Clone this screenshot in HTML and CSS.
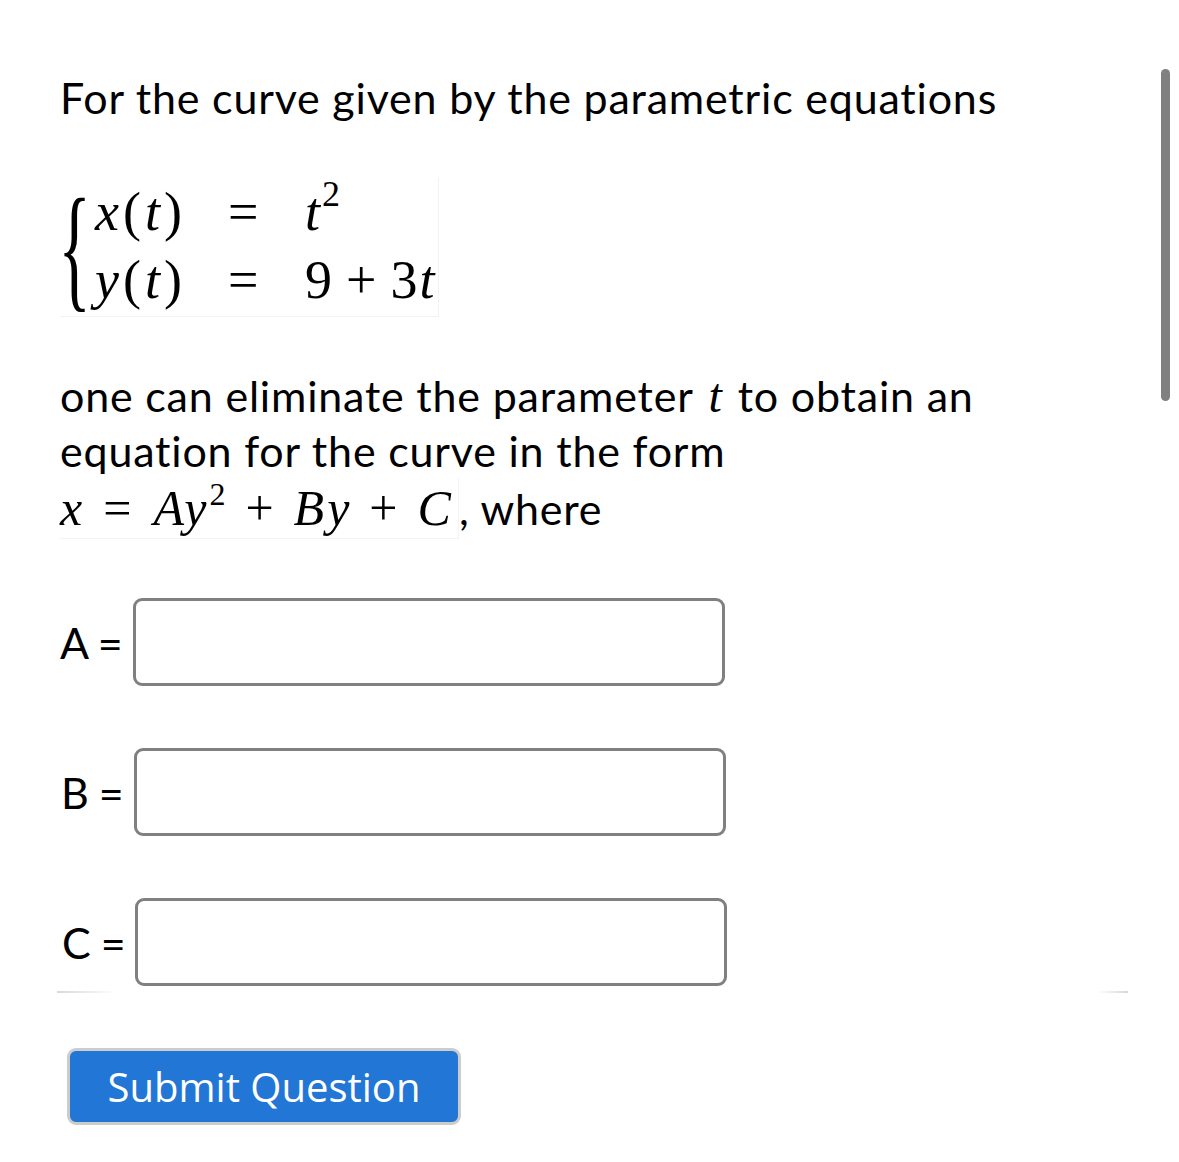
FILE: index.html
```html
<!DOCTYPE html>
<html>
<head>
<meta charset="utf-8">
<link rel="stylesheet" href="styles.css">
</head>
<body>
<div class="page">
  <p class="text first">For the curve given by the parametric equations</p>
  <div class="system">
    <div class="brace">{</div>
    <div class="rows">
      <div class="row"><span class="lhs"><i>x</i>(<i>t</i>)</span><span class="eq">=</span><span class="rhs"><i>t</i><sup>2</sup></span></div>
      <div class="row"><span class="lhs"><i>y</i>(<i>t</i>)</span><span class="eq">=</span><span class="rhs">9<span class="op">+</span>3<i>t</i></span></div>
    </div>
  </div>
  <p class="text second">one can eliminate the parameter <i class="mi">t</i> to obtain an equation for the curve in the form <span class="inline-math"><i>x</i><span class="rel">=</span><i>A</i><i>y</i><sup>2</sup><span class="bin">+</span><i>B</i><i>y</i><span class="bin">+</span><i>C</i></span>, where</p>
  <div class="answers">
    <div class="answer"><span class="label">A =</span><span class="box"></span></div>
    <div class="answer shift1"><span class="label">B =</span><span class="box"></span></div>
    <div class="answer shift2"><span class="label">C =</span><span class="box"></span></div>
  </div>
  <div class="rule"></div>
  <button class="submit">Submit Question</button>
</div>
<div class="scrollbar"></div>
</body>
</html>
```
FILE: styles.css
```css
html, body {
  margin: 0;
  padding: 0;
  background: #ffffff;
}
body {
  width: 1179px;
  height: 1162px;
  overflow: hidden;
  position: relative;
  font-family: Lato, "Noto Sans", sans-serif;
  color: #000;
}
.page {
  padding: 70px 0 0 60px;
  width: 1000px;
}
.text {
  margin: 0;
  font-size: 43px;
  letter-spacing: 0.8px;
  line-height: 55px;
}
.first {
  margin-bottom: 53px;
}
.second {
  margin-top: -3px;
}
.system {
  display: flex;
  align-items: flex-start;
  width: 378px;
  height: 138px;
  border-right: 1px solid #f2f2f2;
  border-bottom: 1px solid #f2f2f2;
  font-family: "Liberation Serif", serif;
  font-size: 54px;
  margin-bottom: 54px;
}
.brace {
  width: 35px;
  font-size: 80px;
  line-height: 80px;
  transform: translate(-2px, 30px) scale(0.85, 1.72);
  transform-origin: 2px 40px;
}
.rows {
  display: flex;
  flex-direction: column;
  padding-top: 0;
}
.row {
  display: flex;
  align-items: baseline;
  line-height: 68px;
  height: 68px;
}
.lhs {
  width: 133px;
  letter-spacing: 4px;
}
.eq {
  width: 77px;
}
.rhs {
  letter-spacing: 2px;
}
.rhs sup {
  font-size: 36px;
  vertical-align: 24px;
  line-height: 0;
}
.op {
  margin: 0 12px;
}
.mi {
  font-family: "Liberation Serif", serif;
  font-size: 48px;
  font-style: italic;
  letter-spacing: 0;
  margin: 0 4px;
}
.inline-math {
  font-family: "Liberation Serif", serif;
  font-size: 50px;
  letter-spacing: 3px;
  display: inline-block;
  padding-right: 4px;
  border-right: 1px solid #f4f4f4;
  border-bottom: 1px solid #f4f4f4;
  line-height: 60px;
}
.inline-math sup {
  font-size: 32px;
  vertical-align: 20px;
  line-height: 0;
}
.rel {
  margin: 0 19px 0 18px;
}
.bin {
  margin: 0 17px;
}
.answers {
  margin-top: 59px;
  display: flex;
  flex-direction: column;
  gap: 62px;
}
.answer {
  display: flex;
  align-items: center;
  gap: 16px;
}
.shift1 { padding-left: 1px; }
.shift2 { padding-left: 2px; }
.label {
  font-family: Lato, "Noto Sans", sans-serif;
  font-size: 43px;
  letter-spacing: -0.5px;
  width: 57px;
  white-space: nowrap;
}
.box {
  display: block;
  width: 586px;
  height: 82px;
  border: 3px solid #808080;
  border-radius: 9px;
}
.rule {
  margin: 5px 0 0 -3px;
  width: 1071px;
  height: 2px;
  background: linear-gradient(to right, #d8d8d8 0, #ffffff 60px, #ffffff 1040px, #d8d8d8 1071px);
}
.submit {
  display: block;
  margin: 55px 0 0 7px;
  width: 394px;
  height: 77px;
  background: #2176d6;
  border: 3px solid #cccccc;
  border-radius: 9px;
  color: #ffffff;
  font-family: "Open Sans", "Noto Sans", sans-serif;
  font-size: 40px;
  padding: 0;
}
.scrollbar {
  position: absolute;
  left: 1161px;
  top: 69px;
  width: 9px;
  height: 332px;
  border-radius: 5px;
  background: #808080;
}
```
